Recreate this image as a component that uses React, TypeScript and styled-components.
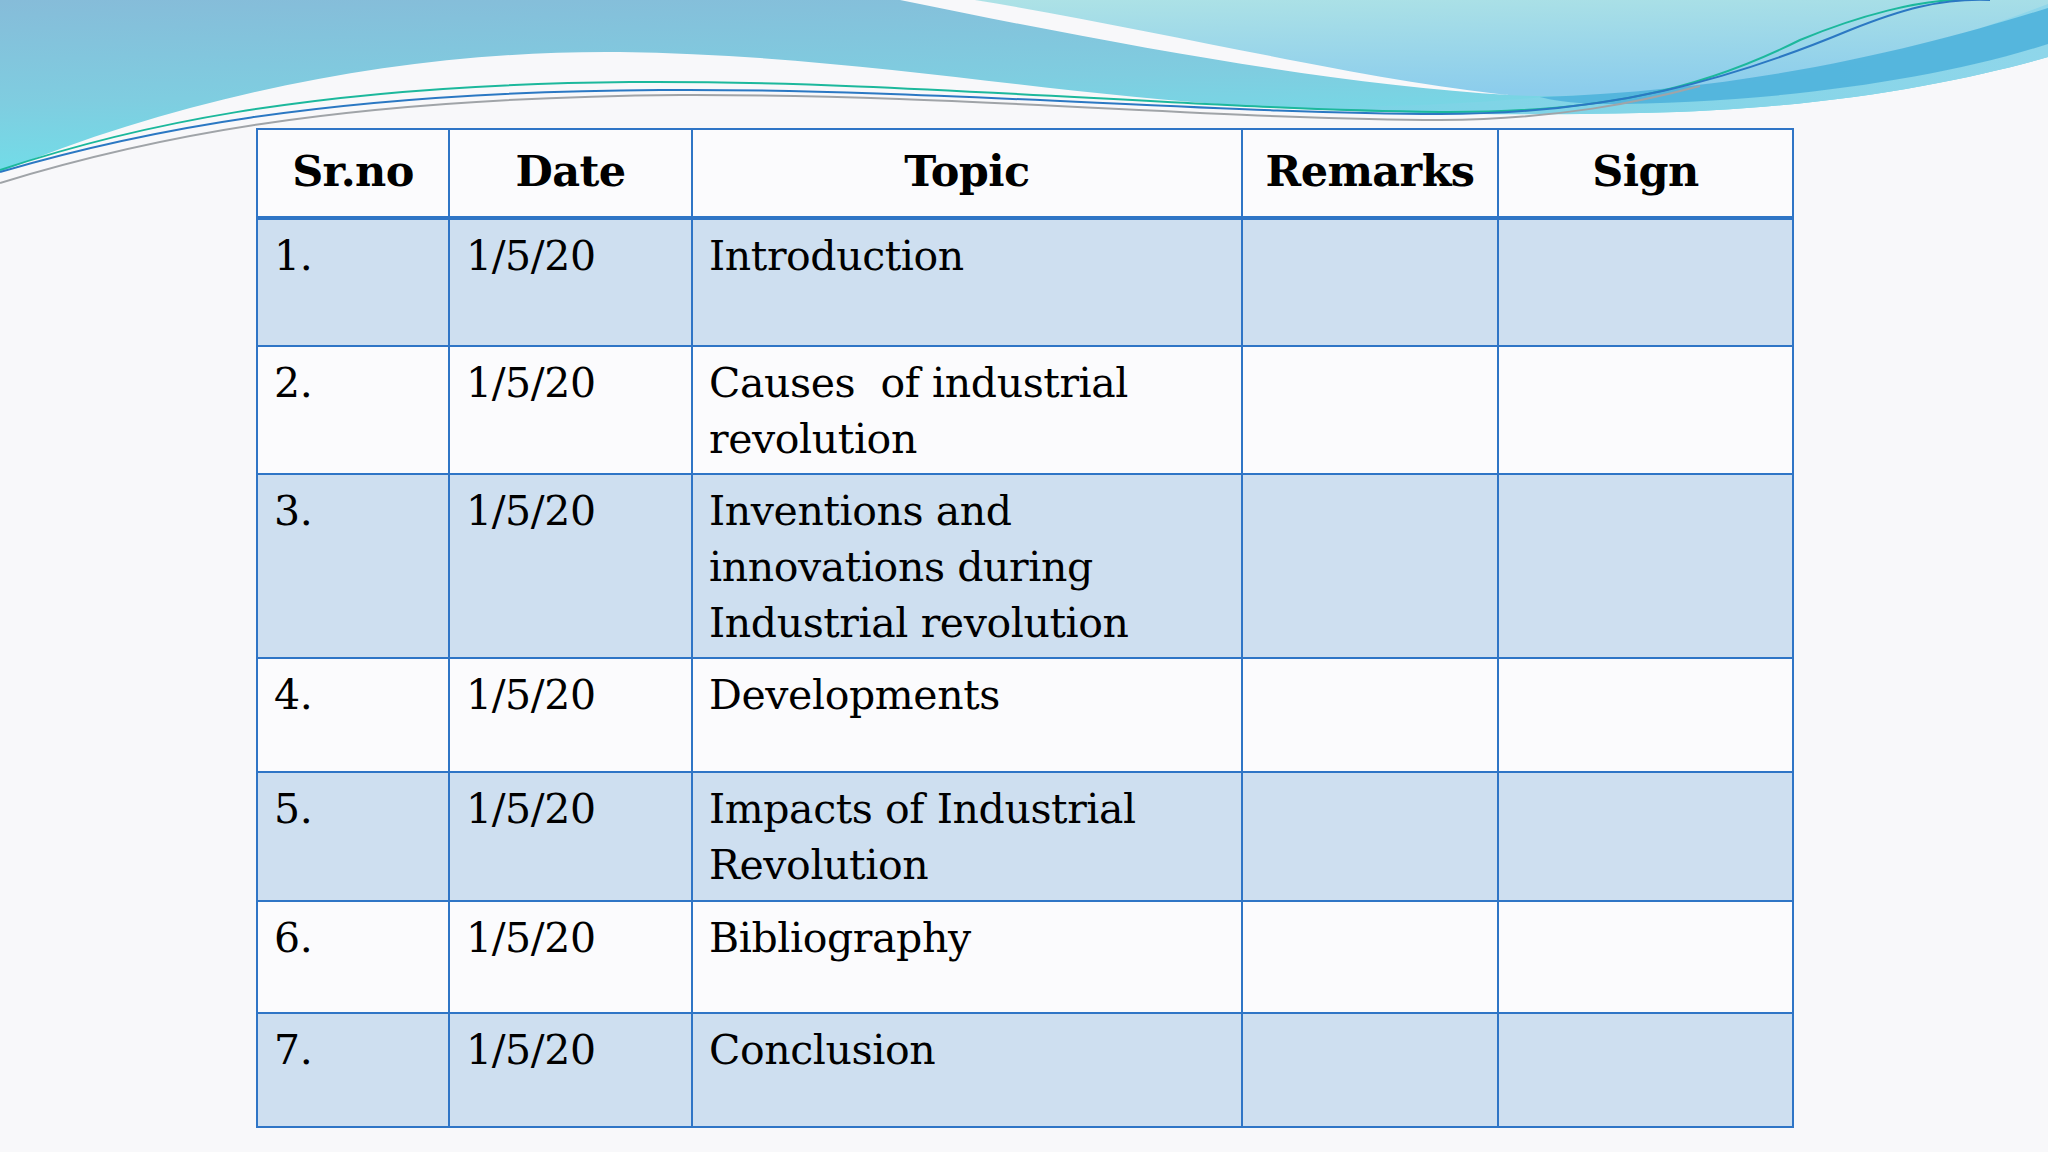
import styled, { createGlobalStyle } from 'styled-components';

const GlobalStyle = createGlobalStyle`
  html, body {
    margin: 0;
    padding: 0;
    background: #f8f8fa;
  }
  body {
    width: 2048px;
    height: 1152px;
    overflow: hidden;
    font-family: 'DejaVu Serif', 'Liberation Serif', serif;
  }
`;

type Lesson = { no: string; date: string; topic: string[]; height: number };

const lessons: Lesson[] = [
  { no: '1.', date: '1/5/20', topic: ['Introduction'], height: 128 },
  { no: '2.', date: '1/5/20', topic: ['Causes  of industrial', 'revolution'], height: 128 },
  {
    no: '3.',
    date: '1/5/20',
    topic: ['Inventions and', 'innovations during', 'Industrial revolution'],
    height: 184,
  },
  { no: '4.', date: '1/5/20', topic: ['Developments'], height: 114 },
  { no: '5.', date: '1/5/20', topic: ['Impacts of Industrial', 'Revolution'], height: 129 },
  { no: '6.', date: '1/5/20', topic: ['Bibliography'], height: 112 },
  { no: '7.', date: '1/5/20', topic: ['Conclusion'], height: 114 },
];

const columns = [
  { label: 'Sr.no', width: 192 },
  { label: 'Date', width: 243 },
  { label: 'Topic', width: 550 },
  { label: 'Remarks', width: 256 },
  { label: 'Sign', width: 295 },
];

const Wave = () => (
  <WaveSvg viewBox="0 0 2048 200" width="2048" height="200">
    <defs>
      <linearGradient id="leftBlue" x1="0" y1="0" x2="0.3" y2="1">
        <stop offset="0" stopColor="#86bcd9" />
        <stop offset="0.55" stopColor="#7fcde0" />
        <stop offset="1" stopColor="#6fe0ea" />
      </linearGradient>
      <linearGradient id="rightCyan" x1="0" y1="0" x2="0.2" y2="1">
        <stop offset="0" stopColor="#ade2e6" />
        <stop offset="1" stopColor="#8ccdec" />
      </linearGradient>
      <linearGradient id="lowBand" x1="0" y1="0" x2="1" y2="0">
        <stop offset="0" stopColor="#77d3e4" />
        <stop offset="1" stopColor="#8fd6ea" />
      </linearGradient>
    </defs>

    {/* lower cyan body of the wave */}
    <path
      d="M0 0 H2048 V57 C1960 82 1820 110 1640 113 C1500 116 1400 114 1250 106 C1050 95 850 55 620 52 C420 50 200 90 0 172 Z"
      fill="url(#leftBlue)"
    />
    {/* band under the right hand swell */}
    <path
      d="M1200 104 C1400 112 1500 100 1560 96 C1760 80 1930 40 2048 0 V57 C1960 82 1820 110 1640 113 C1500 116 1350 112 1200 104 Z"
      fill="url(#lowBand)"
    />
    {/* light area right of the white band */}
    <path
      d="M972 0 H2048 V4 C1900 60 1760 92 1560 96 C1420 99 1260 50 972 0 Z"
      fill="url(#rightCyan)"
    />
    {/* darker stripe on the right */}
    <path
      d="M1540 97 C1760 90 1930 45 2048 8 V44 C1930 82 1760 104 1600 104 C1570 103 1550 100 1540 97 Z"
      fill="#4fb3dc"
      opacity="0.9"
    />
    {/* white band */}
    <path
      d="M900 0 H975 C1160 30 1360 80 1510 95 C1330 84 1120 45 900 0 Z"
      fill="#f8f8fa"
    />

    {/* thin lines */}
    <path
      d="M0 170 C120 130 300 85 630 82 C900 80 1200 110 1440 112 C1600 113 1700 90 1800 40 C1860 15 1920 0 1960 0"
      fill="none"
      stroke="#1cb89c"
      strokeWidth="2"
    />
    <path
      d="M0 172 C130 134 320 92 660 90 C920 88 1220 114 1440 114 C1610 114 1730 80 1850 30 C1900 10 1940 -2 1990 0"
      fill="none"
      stroke="#2b78c3"
      strokeWidth="2"
    />
    <path
      d="M0 183 C140 140 330 98 680 95 C950 94 1230 120 1440 120 C1560 119 1640 102 1700 86"
      fill="none"
      stroke="#a0a4a8"
      strokeWidth="2"
    />
  </WaveSvg>
);

const App = () => (
  <>
    <GlobalStyle />
    <Slide>
      <Wave />
      <Table>
        <colgroup>
          {columns.map((c) => (
            <col key={c.label} style={{ width: c.width }} />
          ))}
        </colgroup>
        <thead>
          <tr>
            {columns.map((c) => (
              <HeadCell key={c.label}>{c.label}</HeadCell>
            ))}
          </tr>
        </thead>
        <tbody>
          {lessons.map((l, i) => (
            <Row key={l.no} $shaded={i % 2 === 0} style={{ height: l.height }}>
              <Cell>{l.no}</Cell>
              <Cell>{l.date}</Cell>
              <Cell>
                {l.topic.map((line) => (
                  <TopicLine key={line}>{line}</TopicLine>
                ))}
              </Cell>
              <Cell />
              <Cell />
            </Row>
          ))}
        </tbody>
      </Table>
    </Slide>
  </>
);

const Slide = styled.main`
  position: relative;
  width: 2048px;
  height: 1152px;
  padding: 128px 0 0 256px;
  box-sizing: border-box;
  background: #f8f8fa;
`;

const WaveSvg = styled.svg`
  position: absolute;
  top: 0;
  left: 0;
  z-index: 0;
`;

const Table = styled.table`
  position: relative;
  z-index: 1;
  width: 1536px;
  table-layout: fixed;
  border-collapse: collapse;
  color: #000;
  font-family: 'DejaVu Serif', 'Liberation Serif', serif;
  background: #fbfbfd;
`;

const HeadCell = styled.th`
  height: 82px;
  padding: 0 0 4px 0;
  border: 2px solid #2f75c6;
  border-bottom-width: 4px;
  font-size: 43px;
  line-height: 50px;
  font-weight: 700;
  text-align: center;
  vertical-align: middle;
  letter-spacing: -0.6px;
`;

const Row = styled.tr<{ $shaded: boolean }>`
  background: ${(p) => (p.$shaded ? '#cedff0' : '#fbfbfd')};
`;

const Cell = styled.td`
  padding: 8px 16px 0 16px;
  border: 2px solid #2f75c6;
  font-size: 41px;
  line-height: 56px;
  letter-spacing: -0.4px;
  vertical-align: top;
  white-space: pre;
`;

const TopicLine = styled.div``;

export default App;
